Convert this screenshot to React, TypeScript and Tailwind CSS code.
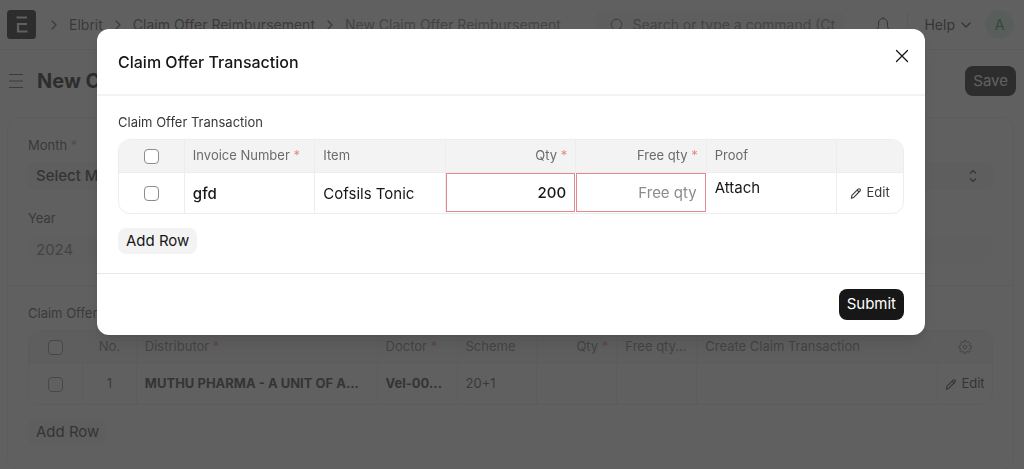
import React, { useState } from 'react';

type IconProps = { className?: string };

const ChevronRight: React.FC<IconProps> = ({ className = '' }) => (
  <svg viewBox="0 0 6 10" className={`w-[6px] h-[10px] shrink-0 ${className}`} fill="none" stroke="currentColor" strokeWidth="1.2">
    <path d="M1 1l4 4-4 4" strokeLinecap="round" strokeLinejoin="round" />
  </svg>
);

const Pencil: React.FC = () => (
  <svg viewBox="0 0 12 12" className="w-3 h-3 shrink-0" fill="none" stroke="currentColor" strokeWidth="1.1" strokeLinejoin="round">
    <path d="M1.4 11.2l.5-2.9 6.2-6.2a1.3 1.3 0 0 1 1.9 1.900L4 10.200z" />
    <path d="M7.200 3.100l1.900 1.900" />
  </svg>
);

const Gear: React.FC = () => (
  <svg viewBox="0 1 24 24" className="w-[14px] h-[14px]" fill="none" stroke="currentColor" strokeWidth="1.7" strokeLinejoin="round">
    <path d="M10.2 2h3.6l.6 2.9 1.6.7 2.5-1.7 2.6 2.6-1.7 2.5.7 1.6 2.9.6v3.6l-2.9.6-.7 1.6 1.7 2.5-2.6 2.6-2.5-1.7-1.6.7-.6 2.9h-3.6l-.6-2.9-1.6-.7-2.5 1.7-2.6-2.6 1.7-2.5-.7-1.6L2 14.800v-3.600l2.900-.6.7-1.600-1.700-2.500 2.600-2.600 2.500 1.700 1.600-.7z" />
    <circle cx="12" cy="13" r="3" />
  </svg>
);

const Star: React.FC = () => <span className="text-[#e58a8a]"> *</span>;

const Check: React.FC<{ label: string }> = ({ label }) => (
  <input
    type="checkbox"
    aria-label={label}
    className="block mx-auto size-[15px] appearance-none rounded border border-[#8c8c8c] bg-white checked:bg-black"
  />
);

const EditButton: React.FC = () => (
  <button className="mx-auto flex items-center gap-1 text-[13px] text-[#383838]">
    <Pencil />
    Edit
  </button>
);

const headCell = 'h-[33px] px-2 bg-[#f3f3f3] border-b border-r border-[#ededed] font-normal truncate';
const bodyCell = 'h-10 px-2 border-r border-[#ededed] truncate';

const Navbar: React.FC = () => (
  <header className="h-[50px] pl-[7px] pr-[10px] flex items-center border-b border-[#ededed] text-sm">
    <a href="#" aria-label="Home" className="shrink-0">
      <svg viewBox="0 0 29 29" className="w-[29px] h-[29px]">
        <rect width="29" height="29" rx="3.5" fill="#171717" />
        <path d="M9.5 7.5h10.500M20 14h-9v7.500h9.500" fill="none" stroke="#fff" strokeWidth="2.2" />
      </svg>
    </a>
    <nav className="ml-[15px] flex items-center gap-3 whitespace-nowrap text-[#525252]">
      <ChevronRight />
      <a href="#">Elbrit</a>
      <ChevronRight />
      <a href="#">Claim Offer Reimbursement</a>
      <ChevronRight />
      <a href="#" className="text-[#7c7c7c]">New Claim Offer Reimbursement</a>
    </nav>
    <div className="ml-auto w-[248px] h-7 pl-[14px] pr-2 flex items-center gap-2 rounded-lg bg-[#f3f3f3] text-[#7c7c7c]">
      <svg viewBox="0 0 14 14" className="w-[14px] h-[14px] shrink-0" fill="none" stroke="#525252">
        <circle cx="6.5" cy="6.5" r="5.3" />
        <path d="M10.5 10.5l2.5 2.5" strokeLinecap="round" />
      </svg>
      <input
        aria-label="Search"
        placeholder="Search or type a command (Ct"
        className="w-full min-w-0 bg-transparent outline-none placeholder:text-[#7c7c7c]"
      />
    </div>
    <button aria-label="Notifications" className="ml-[31px] text-[#383838]">
      <svg viewBox="0 0 16 16" className="w-4 h-4" fill="none" stroke="currentColor" strokeLinejoin="round" strokeLinecap="round">
        <path d="M1.5 12.5h13c-1.5-1-2-2-2-4V6a4.5 4.5 0 0 0-9 0v2.500c0 2-.5 3-2 4z" />
        <path d="M6.5 14.5c.8.8 2.2.8 3 0M8 1.5V.5" />
      </svg>
    </button>
    <div className="mx-4 w-px h-6 bg-[#e2e2e2]"></div>
    <button className="flex items-center gap-2 text-[#383838]">
      Help
      <ChevronRight className="rotate-90" />
    </button>
    <div className="ml-4 size-[29px] shrink-0 rounded-full bg-[#e4f5e9] text-[#278f5e] flex items-center justify-center">A</div>
  </header>
);

const ClaimForm: React.FC = () => (
  <main>
    <div className="px-2 py-4 flex items-center">
      <button aria-label="Toggle sidebar" className="text-[#525252]">
        <svg viewBox="0 0 16 16" className="w-4 h-4" fill="none" stroke="currentColor">
          <path d="M1 1.5h14M1 8h14M1 14.5h14" />
        </svg>
      </button>
      <h1 className="ml-[13px] text-xl leading-[30px] font-bold text-[#171717]">New Claim Offer Reimbursement</h1>
      <button className="ml-auto h-[30px] px-2 rounded-lg bg-[#171717] text-white text-[15px]">Save</button>
    </div>
    <div className="mt-[5px] ml-[7px] mr-[10px] border border-[#ededed] rounded-xl">
      <section className="px-5 pt-[17px] pb-[22px] border-b border-[#ededed] text-[15px]">
        <label htmlFor="month" className="block text-[13px] leading-5 text-[#525252]">Month<Star /></label>
        <div className="mt-[7px] h-7 relative">
          <select id="month" className="w-full h-full px-2 appearance-none rounded-lg bg-[#f3f3f3] font-medium text-[#383838]">
            <option>Select Month</option>
          </select>
          <svg viewBox="0 0 8 14" className="absolute right-4 top-[7px] w-2 h-[14px]" fill="none" stroke="#383838" strokeWidth="1.2">
            <path d="M1 4.5l3-3 3 3M1 9.5l3 3 3-3" />
          </svg>
        </div>
        <label htmlFor="year" className="mt-[18px] block text-[13px] leading-5 text-[#525252]">Year</label>
        <input id="year" defaultValue="2024" className="mt-[7px] w-full h-7 px-2 rounded-lg bg-[#f8f8f8] text-[#7c7c7c]" />
      </section>
      <section className="px-5 pt-[17px] pb-6">
        <p className="text-[13px] leading-5 text-[#525252]">Claim Offer Transaction</p>
        <div className="mt-[7px] border border-[#ededed] rounded-xl overflow-hidden">
          <table className="w-full table-fixed border-separate border-spacing-0 text-left text-[13px] text-[#525252]">
            <colgroup>
              <col className="w-[5.6%]" />
              <col className="w-[5.6%]" />
              <col className="w-[25%]" />
              <col className="w-[8.3%]" />
              <col className="w-[8.3%]" />
              <col className="w-[8.3%]" />
              <col className="w-[8.3%]" />
              <col className="w-[25%]" />
              <col className="w-[5.6%]" />
            </colgroup>
            <thead className="text-[#7c7c7c]">
              <tr>
                <th className={headCell}><Check label="Select all claims" /></th>
                <th className={`${headCell} text-center`}>No.</th>
                <th className={headCell}>Distributor<Star /></th>
                <th className={headCell}>Doctor<Star /></th>
                <th className={headCell}>Scheme</th>
                <th className={`${headCell} text-right`}>Qty<Star /></th>
                <th className={headCell}>Free qty...</th>
                <th className={headCell}>Create Claim Transaction</th>
                <th className="bg-[#f3f3f3] border-b border-[#ededed]">
                  <button aria-label="Configure columns" className="mx-auto block"><Gear /></button>
                </th>
              </tr>
            </thead>
            <tbody>
              <tr>
                <td className={bodyCell}><Check label="Select claim 1" /></td>
                <td className={`${bodyCell} text-center`}>1</td>
                <td className={`${bodyCell} font-bold text-[#383838]`}>MUTHU PHARMA - A UNIT OF A...</td>
                <td className={`${bodyCell} font-bold text-[#383838]`}>Vel-00...</td>
                <td className={bodyCell}>20+1</td>
                <td className={bodyCell}></td>
                <td className={bodyCell}></td>
                <td className={bodyCell}></td>
                <td><EditButton /></td>
              </tr>
            </tbody>
          </table>
        </div>
        <button className="mt-[14px] h-[26px] px-2 rounded-lg bg-[#f3f3f3] text-[15px] text-[#383838]">Add Row</button>
      </section>
    </div>
  </main>
);

const TransactionDialog: React.FC<{ onClose: () => void }> = ({ onClose }) => {
  const [invoice, setInvoice] = useState('gfd');
  const [qty, setQty] = useState('200');
  const [freeQty, setFreeQty] = useState('');

  return (
    <div className="fixed inset-0 z-10 bg-[#333333]/78 flex items-start justify-center pt-[29px] pr-[2px]">
      <div role="dialog" aria-labelledby="dialog-title" className="w-full max-w-[828px] bg-white rounded-xl shadow-lg">
        <div className="h-[67px] pl-[21px] pr-4 flex items-center justify-between border-b-2 border-[#f3f3f3]">
          <h2 id="dialog-title" className="text-base font-medium text-[#171717]">Claim Offer Transaction</h2>
          <button aria-label="Close" onClick={onClose} className="mb-3">
            <svg viewBox="0 0 14 14" className="w-[14px] h-[14px]" fill="none" stroke="#171717" strokeWidth="1.3" strokeLinecap="round">
              <path d="M1.5 1.5l11 11M12.5 1.5l-11 11" />
            </svg>
          </button>
        </div>
        <div className="px-[21px] pt-4 pb-[19px]">
          <p className="text-[13px] leading-5 text-[#383838]">Claim Offer Transaction</p>
          <div className="mt-[7px] border border-[#ededed] rounded-xl overflow-hidden">
            <table className="w-full table-fixed border-separate border-spacing-0 text-left">
              <colgroup>
                <col className="w-[8.4%]" />
                <col />
                <col />
                <col />
                <col />
                <col />
                <col className="w-[8.4%]" />
              </colgroup>
              <thead className="text-[13px] text-[#6b6b6b]">
                <tr>
                  <th className={headCell}><Check label="Select all rows" /></th>
                  <th className={headCell}>Invoice Number<Star /></th>
                  <th className={headCell}>Item</th>
                  <th className={`${headCell} text-right`}>Qty<Star /></th>
                  <th className={`${headCell} text-right`}>Free qty<Star /></th>
                  <th className={headCell}>Proof</th>
                  <th className="bg-[#f3f3f3] border-b border-[#ededed]"></th>
                </tr>
              </thead>
              <tbody className="text-[15px] text-[#171717]">
                <tr>
                  <td className={bodyCell}><Check label="Select row 1" /></td>
                  <td className="border-r border-[#ededed]">
                    <input aria-label="Invoice Number" value={invoice} onChange={(e) => setInvoice(e.target.value)} className="block w-full h-[39px] px-2 font-medium outline-none" />
                  </td>
                  <td className="border-r border-[#ededed]">
                    <input aria-label="Item" defaultValue="Cofsils Tonic" className="block w-full h-[39px] px-2 outline-none" />
                  </td>
                  <td className="pr-px align-top">
                    <input aria-label="Qty" value={qty} onChange={(e) => setQty(e.target.value)} className="block w-full h-[39px] px-2 border border-[#e58a8a] text-right font-medium outline-none" />
                  </td>
                  <td className="pr-px align-top">
                    <input aria-label="Free qty" placeholder="Free qty" value={freeQty} onChange={(e) => setFreeQty(e.target.value)} className="block w-full h-[39px] px-2 border border-[#e58a8a] text-right outline-none placeholder:text-[#8c8c8c]" />
                  </td>
                  <td className="px-2 pt-1 align-top border-r border-[#ededed]">
                    <button>Attach</button>
                  </td>
                  <td><EditButton /></td>
                </tr>
              </tbody>
            </table>
          </div>
          <button className="mt-[14px] h-[26px] px-2 rounded-lg bg-[#f3f3f3] text-[15px] text-[#171717]">Add Row</button>
        </div>
        <div className="py-[15px] px-[21px] flex justify-end border-t border-[#e8e8e8]">
          <button onClick={onClose} className="h-[31px] px-2 rounded-lg bg-[#171717] text-[15px] text-white">Submit</button>
        </div>
      </div>
    </div>
  );
};

const App: React.FC = () => {
  const [isOpen, setIsOpen] = useState(true);

  return (
    <div className="min-h-screen bg-white font-['Inter',sans-serif]">
      <Navbar />
      <ClaimForm />
      {isOpen && <TransactionDialog onClose={() => setIsOpen(false)} />}
    </div>
  );
};

export default App;
